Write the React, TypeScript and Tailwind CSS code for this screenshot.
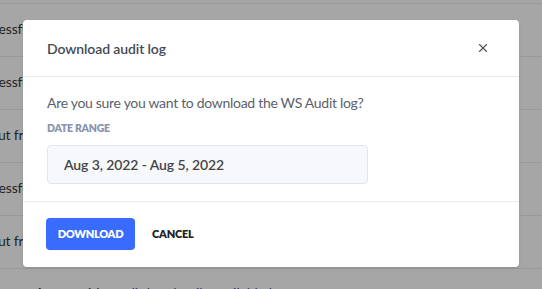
import { X } from 'lucide-react';

const rows = [
  { text: 'Login successfully', shift: 'ml-[-63px]' },
  { text: 'Login successfully', shift: 'ml-[-63px]' },
  { text: 'Logout from session', shift: 'ml-[-31px]' },
  { text: 'Login successfully', shift: 'ml-[-63px]' },
  { text: 'Logout from session', shift: 'ml-[-31px]' },
];

export default function App() {
  return (
    <div className="relative h-[289px] w-[542px] overflow-hidden bg-white font-['Lato',sans-serif]">
      <div className="border-t border-[#ebebeb] mt-[3px]">
        {rows.map((r, i) => (
          <div key={i} className="flex h-[53px] items-center border-b border-[#ebebeb] pb-[3px] text-[14px] tracking-[-0.2px] text-[#3a3a3a]">
            <span className={`${r.shift} whitespace-nowrap`}>{r.text}</span>
          </div>
        ))}
        <div className="flex h-[40px] items-start gap-2 pl-[35px] pt-[13px] text-[14px] text-[#333]">
          <span>A user with</span>
          <span className="text-[#3355cc]">audit log details available here</span>
        </div>
      </div>

      <div className="absolute inset-0 flex justify-center bg-black/35 pt-[20px]">
        <div className="h-[247px] w-[496px] rounded-[4px] bg-white shadow-sm">
          <div className="flex h-[57px] items-center justify-between border-b border-[#e8eaf0] pl-[24px] pr-[29px]">
            <h2 className="text-[14px] font-semibold tracking-[-0.1px] text-[#444955]">Download audit log</h2>
            <X className="h-[14px] w-[14px] text-[#555]" strokeWidth={2} />
          </div>
          <div className="h-[125px] border-b border-[#e8eaf0] px-[24px] pt-[16px]">
            <p className="text-[14px] leading-[20px] tracking-[-0.3px] text-[#5a5f6b]">Are you sure you want to download the WS Audit log?</p>
            <div className="mt-[8px] text-[10.5px] font-extrabold leading-[14px] tracking-tight text-[#8b94ae]">DATE RANGE</div>
            <div className="mt-[10px] flex h-[39px] w-[321px] items-center rounded-[4px] border border-[#e2e5ee] bg-[#f7f8fc] px-[16px] text-[14px] font-semibold tracking-[-0.1px] text-[#444]">
              Aug 3, 2022 - Aug 5, 2022
            </div>
          </div>
          <div className="flex items-center gap-[17px] px-[23px] pt-[16px]">
            <button className="flex h-[32px] w-[89px] items-center justify-center rounded-[4px] bg-[#3a6bff] text-[11px] font-extrabold tracking-[-0.3px] text-white">
              DOWNLOAD
            </button>
            <button className="text-[11px] font-extrabold tracking-[-0.2px] text-[#222]">CANCEL</button>
          </div>
        </div>
      </div>
    </div>
  );
}
